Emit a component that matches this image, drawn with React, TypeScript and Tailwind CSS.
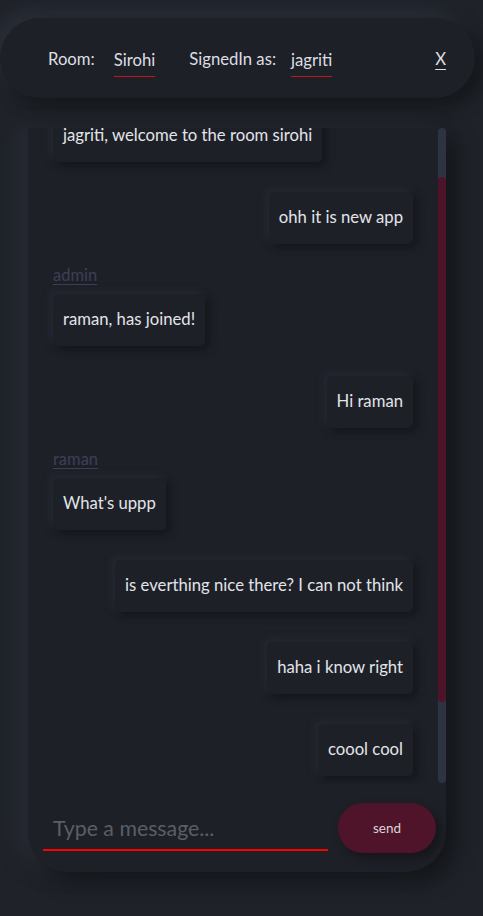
import React from "react";

type Msg = { text: string; mine?: boolean; user?: string };

const messages: Msg[] = [
  { text: "jagriti, welcome to the room sirohi" },
  { text: "ohh it is new app", mine: true },
  { text: "raman, has joined!", user: "admin" },
  { text: "Hi raman", mine: true },
  { text: "What's uppp", user: "raman" },
  { text: "is everthing nice there? I can not think", mine: true },
  { text: "haha i know right", mine: true },
  { text: "coool cool", mine: true },
];

const font = { fontFamily: "Lato, 'Open Sans', sans-serif" };

function Bubble({ msg, first }: { msg: Msg; first: boolean }) {
  const spacing = first ? "-mt-[18px]" : msg.user ? "mt-[22px]" : "mt-[30px]";
  return (
    <div className={`flex flex-col ${spacing} ${msg.mine ? "items-end" : "items-start"}`}>
      {msg.user && (
        <span className="text-[16.5px] leading-[18px] text-[#3c3f57] border-b border-[#3c3f57] mb-[9px]">
          {msg.user}
        </span>
      )}
      <div className="h-[52px] flex items-center px-[10px] rounded-[5px] bg-[#1e2028] text-[16.7px] text-[#e2e4e8] shadow-[4px_4px_8px_#14161a,-3px_-3px_7px_#272b34]">
        {msg.text}
      </div>
    </div>
  );
}

export default function App() {
  return (
    <div className="min-h-[916px] bg-[#1f2229] pt-[18px] overflow-hidden" style={font}>
      {/* header */}
      <header className="w-[475px] h-[80px] rounded-full bg-[#1e2028] flex items-center pt-[3px] pl-[48px] pr-[29px] text-[16.7px] text-[#dcdee2] shadow-[8px_8px_16px_#15171b,-8px_-8px_16px_#2a2f38]">
        <span>Room:</span>
        <span className="ml-[19px] border-b border-[#c0161c] pb-[3px] mt-[6px]">Sirohi</span>
        <span className="ml-[34px]">SignedIn as:</span>
        <span className="ml-[15px] border-b border-[#c0161c] pb-[3px] mt-[6px]">jagriti</span>
        <span className="ml-auto underline underline-offset-4">X</span>
      </header>

      {/* chat */}
      <main className="mt-[30px] ml-[28px] w-[418px] h-[744px] bg-[#1e2028] rounded-b-[40px] flex flex-col shadow-[10px_10px_20px_#14161a,-12px_0_18px_#282c35]">
        <div className="h-[656px] flex overflow-hidden">
          <div className="flex-1 pl-[25px] pr-[25px] flex flex-col">
            {messages.map((m, i) => (
              <Bubble key={i} msg={m} first={i === 0} />
            ))}
          </div>
          <div className="w-[8px] h-[655px] rounded-full bg-[#2e3344] flex flex-col">
            <div className="mt-[49px] h-[525px] rounded-[4px] bg-[#4d1429]" />
          </div>
        </div>

        <div className="flex-1 flex items-center pl-[15px] pr-[10px] pt-[2px] pb-[2px]">
          <input
            placeholder="Type a message..."
            className="w-[285px] h-[46px] pl-[10px] pt-[2px] bg-transparent border-b-2 border-[#ff0000] outline-none text-[21.3px] text-[#dcdee2] placeholder:text-[#5b5e64]"
            style={font}
          />
          <button className="ml-[10px] w-[98px] h-[50px] rounded-full bg-[#4f1429] text-[13.5px] text-[#dcd2da] shadow-[5px_5px_10px_#14161a]">
            send
          </button>
        </div>
      </main>
    </div>
  );
}
